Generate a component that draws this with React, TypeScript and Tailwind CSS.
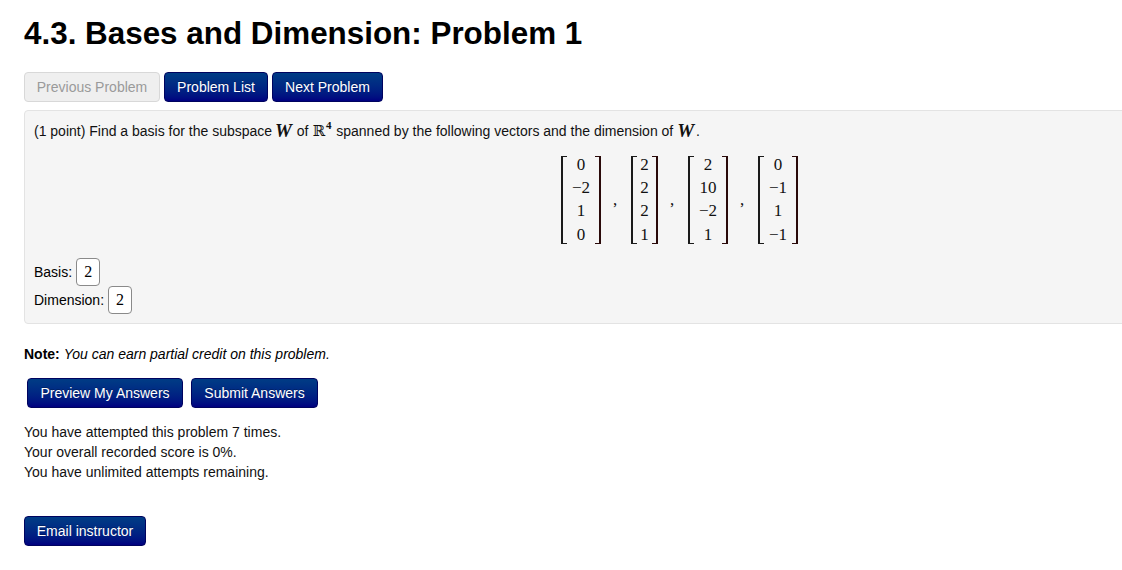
const btn = "flex h-[30px] items-center justify-center rounded-[4px] border border-[#00035f] bg-gradient-to-b from-[#003c85] to-[#000080] text-white text-[14px] [text-shadow:0_-1px_0_rgba(0,0,0,0.25)]";

function Matrix({ rows, width }: { rows: string[]; width: string }) {
  return (
    <div className={`relative flex h-[88px] flex-col items-center ${width}`}>
      <div className="absolute left-0 top-0 h-full w-[6px] border-y-[1.5px] border-l-2 border-[#1a1a1a]" />
      <div className="absolute right-0 top-0 h-full w-[6px] border-y-[1.5px] border-r-2 border-[#2a0a0a]" />
      <div className="-mt-[3.5px] flex flex-col items-center">
        {rows.map((r, i) => (
          <div key={i} className="h-[23.4px] text-[17px] leading-[23.4px] text-[#111]">{r}</div>
        ))}
      </div>
    </div>
  );
}

function Comma() {
  return <div className="ml-[12px] mr-[14px] mt-[36px] w-[4px] text-[17px] leading-[16px] text-[#111]">,</div>;
}

export default function App() {
  return (
    <div className="h-[570px] w-[1122px] overflow-hidden bg-white pl-6 font-['Liberation_Sans',Arial,sans-serif] text-[14px] text-black">
      <h1 className="w-[1098px] pt-[14px] text-[31.4px] font-bold leading-[40px] whitespace-nowrap">
        4.3. Bases and Dimension: Problem 1
      </h1>
      <div className="mt-[18px] flex gap-1">
        <div className="flex h-[30px] w-[136px] items-center justify-center rounded-[4px] border border-[#d8d8d8] bg-[#efefef] text-[#9a9a9a]">Previous Problem</div>
        <div className={`${btn} w-[104px]`}>Problem List</div>
        <div className={`${btn} w-[111px]`}>Next Problem</div>
      </div>
      <div className="mt-2 h-[214px] w-[1120px] rounded-[4px] border border-[#e3e3e3] bg-[#f5f5f5] pl-[9px]">
        <p className="flex h-[20px] items-center pt-[20px] whitespace-nowrap text-[#111]">
          <span>(1 point) Find a basis for the subspace&nbsp;</span>
          <span className="ml-[-1px] font-['Liberation_Serif',serif] text-[19px] font-bold italic text-[#111]">W</span>
          <span className="ml-[1px]">&nbsp;of&nbsp;</span>
          <span className="font-['DejaVu_Serif',serif] text-[15px]">ℝ</span>
          <sup className="relative top-[-6px] ml-[1px] mr-[1px] font-['Liberation_Serif',serif] text-[11px] font-bold">4</sup>
          <span>&nbsp;spanned by the following vectors and the dimension of&nbsp;</span>
          <span className="font-['Liberation_Serif',serif] text-[19px] font-bold italic text-[#111]">W</span>
          <span className="ml-[2px]">.</span>
        </p>
        <div className="mt-[25px] ml-[527px] flex items-start font-['Liberation_Serif',serif]">
          <Matrix rows={["0", "−2", "1", "0"]} width="w-[40px]" />
          <Comma />
          <Matrix rows={["2", "2", "2", "1"]} width="w-[27px]" />
          <Comma />
          <Matrix rows={["2", "10", "−2", "1"]} width="w-[40px]" />
          <Comma />
          <Matrix rows={["0", "−1", "1", "−1"]} width="w-[40px]" />
        </div>
        <div className="mt-[14px] flex h-[28px] items-center gap-[4px]">
          <span>Basis:</span>
          <span className="flex h-[28px] w-[24px] items-center justify-center rounded-[4px] border border-[#8a8a8a] bg-white font-['Liberation_Serif',serif] text-[16px]">2</span>
        </div>
        <div className="flex h-[28px] items-center gap-[4px]">
          <span>Dimension:</span>
          <span className="flex h-[28px] w-[24px] items-center justify-center rounded-[4px] border border-[#8a8a8a] bg-white font-['Liberation_Serif',serif] text-[16px]">2</span>
        </div>
      </div>
      <p className="mt-[20px] leading-[20px]">
        <b>Note:</b> <i>You can earn partial credit on this problem.</i>
      </p>
      <div className="mt-[14px] ml-[3px] flex gap-2">
        <div className={`${btn} w-[156px]`}>Preview My Answers</div>
        <div className={`${btn} w-[127px]`}>Submit Answers</div>
      </div>
      <div className="mt-[14px] leading-[20px] text-[#111]">
        <p>You have attempted this problem 7 times.</p>
        <p>Your overall recorded score is 0%.</p>
        <p>You have unlimited attempts remaining.</p>
      </div>
      <div className={`${btn} mt-[34px] w-[122px]`}>Email instructor</div>
    </div>
  );
}
